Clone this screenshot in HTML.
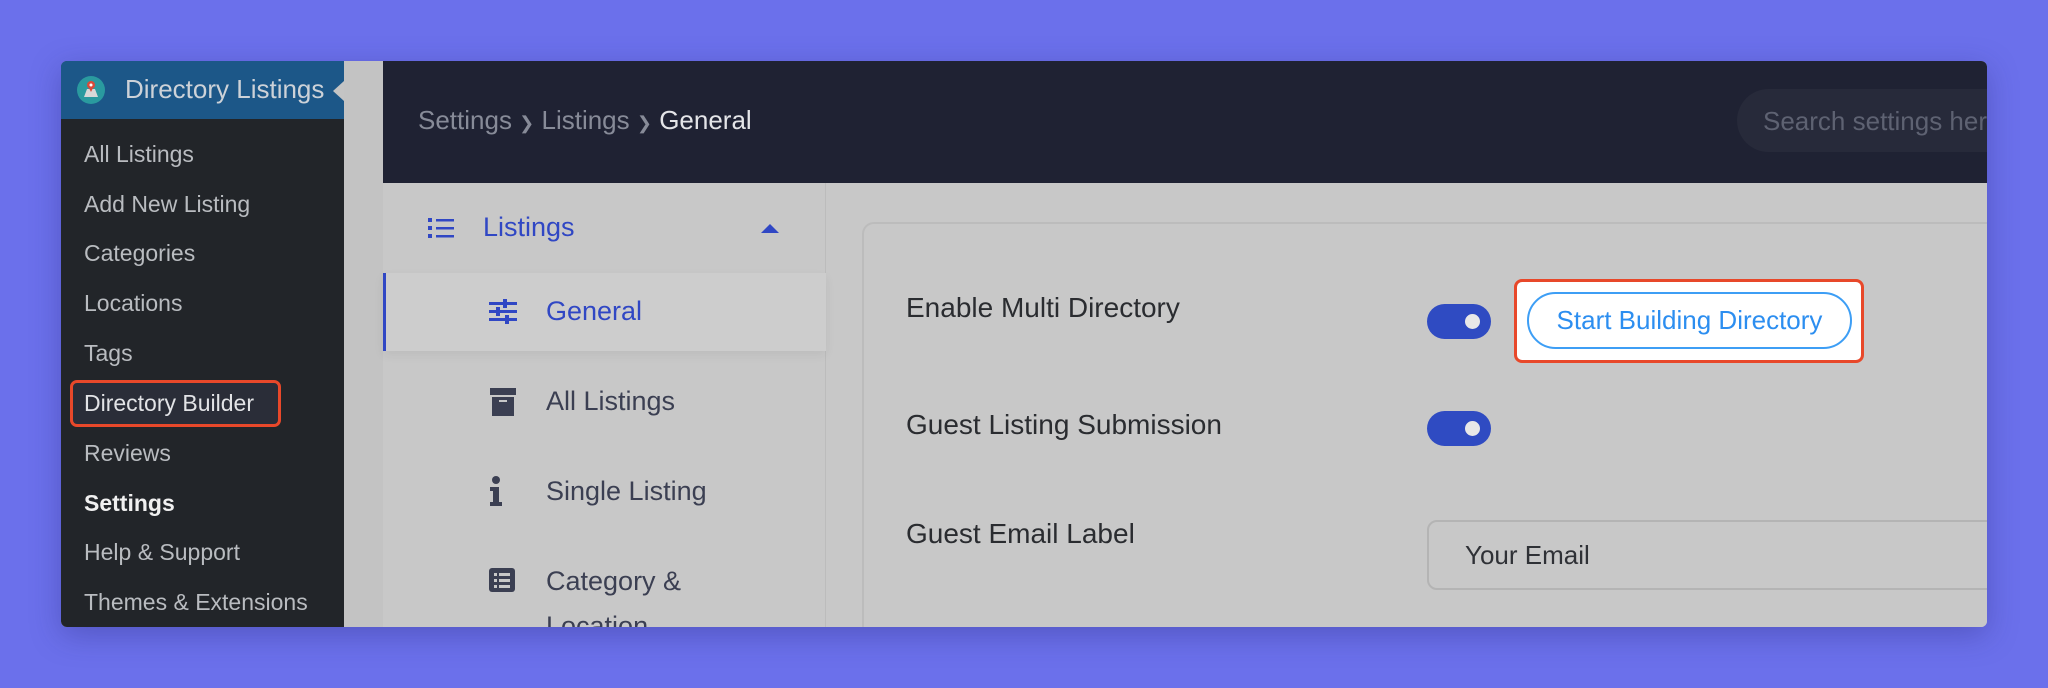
<!DOCTYPE html>
<html><head><meta charset="utf-8"><style>
*{margin:0;padding:0;box-sizing:border-box}
body{width:2048px;height:688px;background:#6b70eb;font-family:"Liberation Sans",sans-serif;position:relative;overflow:hidden}
.win{position:absolute;left:61px;top:61px;width:1926px;height:566px;border-radius:6px;overflow:hidden;background:#c8c8c8;box-shadow:0 8px 30px rgba(40,40,120,.35)}
.side{position:absolute;left:0;top:0;width:283px;height:566px;background:#222529}
.top{position:absolute;left:0;top:0;width:283px;height:58px;background:#1c5788}
.top .t{position:absolute;left:64px;top:13px;font-size:26px;color:#cdd2d8;white-space:nowrap}
.logo{position:absolute;left:16px;top:15px;width:28px;height:28px;border-radius:50%;background:#2a9a9f}
.notch{position:absolute;left:272px;top:20px;width:0;height:0;border-top:10px solid transparent;border-bottom:10px solid transparent;border-right:11px solid #c4c4c4}
.mi{position:absolute;left:23px;font-size:23px;color:#b9bcc0;white-space:nowrap}
.gap{position:absolute;left:283px;top:0;width:39px;height:566px;background:#c3c3c3}
.hdr{position:absolute;left:322px;top:0;width:1604px;height:122px;background:#1f2233}
.bc{position:absolute;left:35px;top:44px;font-size:26px;color:#878b98}
.bc b{font-weight:normal;color:#e4e5e8}
.srch{position:absolute;left:1354px;top:28px;width:300px;height:63px;border-radius:32px;background:#272a3a}
.srch span{position:absolute;left:26px;top:17px;font-size:26px;color:#5e6272;white-space:nowrap}
.nav{position:absolute;left:322px;top:122px;width:443px;height:444px;background:#c8c8c8;border-right:1px solid #bcbcbc}
.ni{position:absolute;font-size:27px;color:#3b3f52;white-space:nowrap}
.card{position:absolute;left:801px;top:161px;width:1200px;height:500px;border:2px solid #bcbcbc;border-radius:12px;background:#c8c8c8}
.lbl{position:absolute;left:845px;font-size:28px;color:#2a2c30;white-space:nowrap}
.tog{position:absolute;left:1366px;width:64px;height:35px;border-radius:18px;background:#2f4bc2}
.tog:after{content:"";position:absolute;right:11px;top:10px;width:15px;height:15px;border-radius:50%;background:#e8e8e8}
</style></head><body>
<div class="win">
 <div class="side">
  <div class="top"><div class="logo"><svg width="28" height="28" viewBox="0 0 28 28"><path d="M7 21 L10 13 L18 13 L21 21Z" fill="#d8d8d8"/><circle cx="14" cy="9" r="4" fill="#d94a3a"/><path d="M11 10 L14 16 L17 10Z" fill="#d94a3a"/><circle cx="14" cy="9" r="1.5" fill="#fff"/></svg></div><div class="t">Directory Listings</div><div class="notch"></div></div>
  <div class="mi" style="top:80px">All Listings</div>
  <div class="mi" style="top:130px">Add New Listing</div>
  <div class="mi" style="top:179px">Categories</div>
  <div class="mi" style="top:229px">Locations</div>
  <div class="mi" style="top:279px">Tags</div>
  <div style="position:absolute;left:9px;top:319px;width:211px;height:47px;border:3px solid #e8482a;border-radius:7px;background:#2a2d38"></div>
  <div class="mi" style="top:329px;color:#e2e3e6">Directory Builder</div>
  <div class="mi" style="top:379px">Reviews</div>
  <div class="mi" style="top:429px;color:#f0f0f0;font-weight:bold">Settings</div>
  <div class="mi" style="top:478px">Help &amp; Support</div>
  <div class="mi" style="top:528px">Themes &amp; Extensions</div>
 </div>
 <div class="gap"></div>
 <div class="hdr">
  <div class="bc">Settings <span style="font-size:18px">&#10095;</span> Listings <span style="font-size:18px">&#10095;</span> <b>General</b></div>
  <div class="srch"><span>Search settings here</span></div>
 </div>
 <div class="nav">
  <svg style="position:absolute;left:45px;top:34px" width="26" height="22" viewBox="0 0 26 22"><g fill="#3047c4"><rect x="0" y="1" width="4" height="4"/><rect x="0" y="9" width="4" height="4"/><rect x="0" y="17" width="4" height="4"/><rect x="8" y="2" width="18" height="2.5"/><rect x="8" y="10" width="18" height="2.5"/><rect x="8" y="18" width="18" height="2.5"/></g></svg>
  <div class="ni" style="left:100px;top:29px;color:#3047c4">Listings</div>
  <svg style="position:absolute;left:378px;top:40px" width="18" height="10"><path d="M0 10 L9 1 L18 10Z" fill="#3047c4"/></svg>
  <div style="position:absolute;left:0;top:90px;width:443px;height:78px;background:#cdcdcd;border-left:3px solid #3047c4;box-shadow:0 4px 10px rgba(0,0,0,.06)"></div>
  <svg style="position:absolute;left:106px;top:116px" width="28" height="26" viewBox="0 0 28 26"><g fill="#3047c4"><rect x="0" y="3" width="28" height="3"/><rect x="0" y="11" width="28" height="3"/><rect x="0" y="19" width="28" height="3"/><rect x="14" y="0" width="4" height="9"/><rect x="7" y="8" width="4" height="9"/><rect x="16" y="16" width="4" height="9"/></g></svg>
  <div class="ni" style="left:163px;top:113px;color:#3047c4">General</div>
  <svg style="position:absolute;left:107px;top:205px" width="26" height="28" viewBox="0 0 26 28"><rect x="0" y="0" width="26" height="7" fill="#3b3f52"/><rect x="2" y="9" width="22" height="19" fill="#3b3f52"/><rect x="9" y="12" width="8" height="2" fill="#c8c8c8"/></svg>
  <div class="ni" style="left:163px;top:203px">All Listings</div>
  <svg style="position:absolute;left:106px;top:293px" width="14" height="30" viewBox="0 0 14 30"><circle cx="7" cy="4" r="4" fill="#3b3f52"/><path d="M1 11 H10 V26 H13 V30 H1 V26 H4 V15 H1Z" fill="#3b3f52"/></svg>
  <div class="ni" style="left:163px;top:293px">Single Listing</div>
  <svg style="position:absolute;left:106px;top:385px" width="26" height="24" viewBox="0 0 26 24"><rect width="26" height="24" rx="3" fill="#3b3f52"/><g fill="#c8c8c8"><rect x="5" y="5" width="3" height="3"/><rect x="5" y="11" width="3" height="3"/><rect x="5" y="17" width="3" height="3"/><rect x="10" y="5" width="11" height="3"/><rect x="10" y="11" width="11" height="3"/><rect x="10" y="17" width="11" height="3"/></g></svg>
  <div class="ni" style="left:163px;top:383px">Category &amp;</div>
  <div class="ni" style="left:163px;top:428px">Location</div>
 </div>
 <div class="card"></div>
 <div class="lbl" style="top:231px">Enable Multi Directory</div>
 <div class="tog" style="top:243px"></div>
 <div style="position:absolute;left:1453px;top:218px;width:350px;height:84px;border:3px solid #e8482a;border-radius:8px;background:#fff"></div>
 <div style="position:absolute;left:1466px;top:231px;width:325px;height:57px;border:2px solid #3d9ef5;border-radius:29px;background:#fff;color:#2c8ef0;font-size:26px;text-align:center;line-height:53px;white-space:nowrap">Start Building Directory</div>
 <div class="lbl" style="top:348px">Guest Listing Submission</div>
 <div class="tog" style="top:350px"></div>
 <div class="lbl" style="top:457px">Guest Email Label</div>
 <div style="position:absolute;left:1366px;top:459px;width:600px;height:70px;border:2px solid #b4b4b4;border-radius:10px"></div>
 <div style="position:absolute;left:1404px;top:479px;font-size:26px;color:#2f3136">Your Email</div>
</div>
</body></html>
